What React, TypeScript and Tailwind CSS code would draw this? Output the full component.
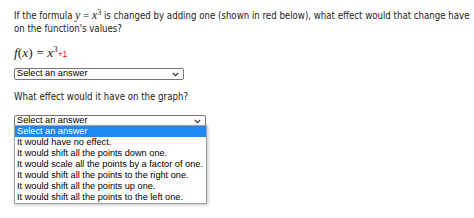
import React from "react";

const opts = [
  "Select an answer",
  "It would have no effect.",
  "It would shift all the points down one.",
  "It would scale all the points by a factor of one.",
  "It would shift all the points to the right one.",
  "It would shift all the points up one.",
  "It would shift all the points to the left one.",
];

function Chevron() {
  return (
    <svg width="7" height="5" viewBox="0 0 7 5" className="shrink-0">
      <path d="M0.8 1 L3.5 3.7 L6.2 1" fill="none" stroke="#333" strokeWidth="1.1" />
    </svg>
  );
}

function Sel({ wide }: { wide?: boolean }) {
  return (
    <div
      className={`${wide ? "w-[192px]" : "w-[170px]"} h-[12px] border border-[#767676] rounded-[2px] bg-white flex items-center justify-between pl-[2px] pr-[4px] text-[9.2px] leading-none text-black font-['Liberation_Sans',Arial,sans-serif]`}
    >
      <span>Select an answer</span>
      <Chevron />
    </div>
  );
}

const M = ({ children }: { children: React.ReactNode }) => (
  <span className="italic font-['Liberation_Serif',serif] text-[11.5px]">{children}</span>
);

export default function App() {
  return (
    <div className="w-[474px] h-[218px] bg-white relative overflow-hidden text-[#222] font-['DejaVu_Sans_Condensed','DejaVu_Sans',sans-serif]">
      <div className="pl-[14px] pt-[9px]">
        <div className="text-[9.6px] leading-[13px] whitespace-nowrap">
          If the formula <M>y</M> <span className="font-['Liberation_Serif',serif] text-[11px]">=</span> <M>x</M>
          <sup className="text-[8px] font-['Liberation_Serif',serif] -top-[0.5em]">3</sup> is changed by adding one (shown in red below), what effect would that change have
          <br />
          on the function's values?
        </div>
        <div className="mt-[10px] text-[13.5px] leading-[16px] font-['Liberation_Serif',serif]">
          <span className="italic">f</span>(<span className="italic">x</span>) = <span className="italic">x</span>
          <sup className="text-[9px] -top-[0.6em]">3</sup>
          <span className="text-[#e00] text-[8.5px] font-['Liberation_Sans',sans-serif]">+1</span>
        </div>
        <div className="mt-[6px]">
          <Sel />
        </div>
        <div className="mt-[10px] text-[9.6px] leading-[13px]">What effect would it have on the graph?</div>
        <div className="mt-[12px] relative w-[192px]">
          <Sel wide />
          <div className="absolute left-0 top-[10px] w-[193px] border border-[#a0a0a0] bg-white shadow-[1px_1px_3px_rgba(0,0,0,0.25)] text-[9.2px] text-black font-['Liberation_Sans',Arial,sans-serif]">
            {opts.map((o, i) => (
              <div key={i} className={`h-[11px] leading-[11px] pl-[2px] ${i === 0 ? "bg-[#1e88f0] text-white" : ""}`}>
                {o}
              </div>
            ))}
          </div>
        </div>
      </div>
    </div>
  );
}
